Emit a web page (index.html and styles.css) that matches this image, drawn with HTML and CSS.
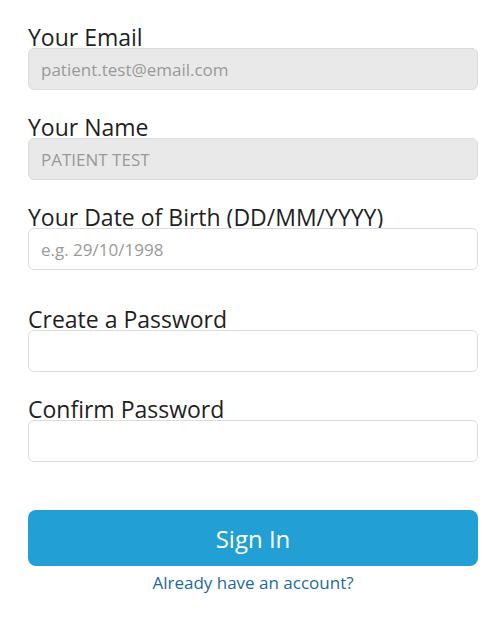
FILE: index.html
```html
<!DOCTYPE html>
<html>
<head>
<meta charset="utf-8">
<link rel="stylesheet" href="styles.css">
</head>
<body>
<form class="form">
  <div class="field">
    <label class="label">Your Email</label>
    <input class="input input-disabled" type="text" value="patient.test@email.com" disabled>
  </div>
  <div class="field">
    <label class="label">Your Name</label>
    <input class="input input-disabled" type="text" value="PATIENT TEST" disabled>
  </div>
  <div class="field field-dob">
    <label class="label">Your Date of Birth (DD/MM/YYYY)</label>
    <input class="input" type="text" placeholder="e.g. 29/10/1998">
  </div>
  <div class="field">
    <label class="label">Create a Password</label>
    <input class="input" type="password">
  </div>
  <div class="field field-last">
    <label class="label">Confirm Password</label>
    <input class="input" type="password">
  </div>
  <button class="button" type="button">Sign In</button>
  <a class="link" href="#">Already have an account?</a>
</form>
</body>
</html>
```
FILE: styles.css
```css
html, body {
  margin: 0;
  padding: 0;
  background: #ffffff;
}
body {
  font-family: "Open Sans", "Noto Sans", sans-serif;
  color: #212121;
}
.form {
  display: flex;
  flex-direction: column;
  width: 450px;
  padding: 25px 0 0 28px;
}
.field {
  display: flex;
  flex-direction: column;
  margin-bottom: 25px;
}
.field-dob {
  margin-bottom: 37px;
}
.field-last {
  margin-bottom: 48px;
}
.label {
  font-size: 23px;
  line-height: 25px;
  height: 23px;
  color: #1f1f1f;
  white-space: nowrap;
}
.input {
  box-sizing: border-box;
  height: 42px;
  width: 450px;
  margin: 0;
  padding: 0 12px;
  border: 1px solid #dcdcdc;
  border-radius: 6px;
  background: #ffffff;
  font-family: "Open Sans", "Noto Sans", sans-serif;
  font-size: 17px;
  color: #333;
  outline: none;
}
.input::placeholder {
  color: #9a9a9a;
}
.input-disabled {
  background: #e9e9e9;
  color: #999999;
  -webkit-text-fill-color: #999999;
  opacity: 1;
}
.button {
  box-sizing: border-box;
  height: 56px;
  width: 450px;
  margin: 0;
  border: none;
  border-radius: 8px;
  background: #22a0d6;
  color: #ffffff;
  font-family: "Open Sans", "Noto Sans", sans-serif;
  font-size: 24px;
  cursor: pointer;
}
.link {
  align-self: center;
  margin-top: 5px;
  font-size: 17px;
  line-height: 24px;
  color: #1d6a9c;
  text-decoration: none;
}
```
